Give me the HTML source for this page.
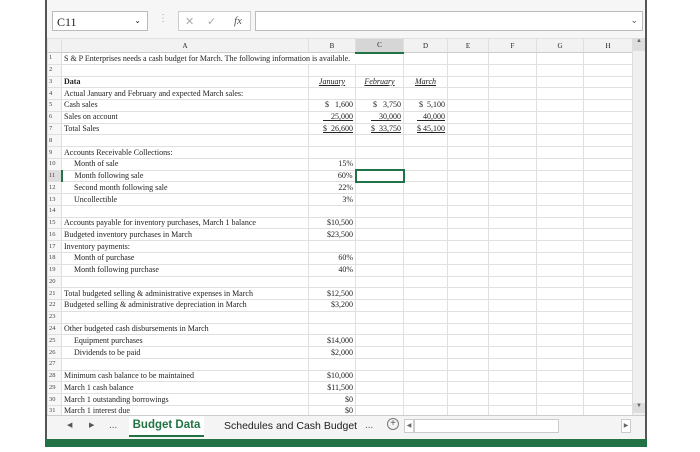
<!DOCTYPE html>
<html><head><meta charset="utf-8"><style>
*{margin:0;padding:0;box-sizing:border-box}
body{width:700px;height:452px;background:#fff;position:relative;overflow:hidden;font-family:"Liberation Serif",serif;color:#222}
.frame{position:absolute;left:45px;top:0;width:602px;height:447px;border-left:2px solid #555;border-right:2px solid #555;background:#f6f6f6}
.nb{position:absolute;left:52px;top:11px;width:96px;height:20px;border:1px solid #bbb;background:#fff;font:12px "Liberation Serif",serif;padding:3px 4px}
.fb{position:absolute;left:178px;top:11px;width:73px;height:20px;border:1px solid #ccc;background:#fff;color:#aaa;font:11px "Liberation Sans",sans-serif}
.fi{position:absolute;left:255px;top:11px;width:388px;height:20px;border:1px solid #bbb;background:#fff}
table{position:absolute;left:47px;top:38px;border-collapse:collapse;table-layout:fixed;background:#fff}
td{height:11.77px;border:1px solid #e0e0e0;font-size:8px;line-height:10px;white-space:nowrap;overflow:visible;padding:0 2px}
tr.h td{height:14px;background:#f2f2f2;text-align:center;font-size:7px;border-bottom:1px solid #ccc}
td.n{font-size:6.5px;color:#444;padding:0 1px;background:#f7f7f7}
td.r{text-align:right}
.u{text-decoration:underline;font-style:italic;text-align:center}
.ul{text-decoration:underline}
.sb{position:absolute;left:632px;top:38px;width:13px;height:377px;background:#f0f0f0;border-left:1px solid #ddd}
.tabs{position:absolute;left:47px;top:415px;width:598px;height:23px;background:#f4f4f4;border-top:1px solid #ccc;font:10px "Liberation Sans",sans-serif}
.green{position:absolute;left:45px;top:439px;width:602px;height:8px;background:#217346}
</style></head><body>
<div class="frame"></div>
<div class="nb">C11<span style="position:absolute;right:6px;top:4px;font-size:8px;font-family:'Liberation Sans',sans-serif">⌄</span></div>
<div style="position:absolute;left:158px;top:13px;color:#aaa;font-size:10px">⋮</div>
<div class="fb"><span style="position:absolute;left:6px;top:3px">✕</span><span style="position:absolute;left:28px;top:3px">✓</span><span style="position:absolute;left:55px;top:3px;color:#555;font-style:italic;font-family:'Liberation Serif',serif">fx</span></div>
<div class="fi"><span style="position:absolute;right:4px;top:3px;font-size:9px;color:#555">⌄</span></div>
<table>
<colgroup><col style="width:14px"><col style="width:247px"><col style="width:47px"><col style="width:48px"><col style="width:44px"><col style="width:41px"><col style="width:48px"><col style="width:47px"><col style="width:49px"></colgroup>
<tr class="h"><td></td><td>A</td><td>B</td><td style="background:#d6d6d6;border-bottom:2px solid #217346">C</td><td>D</td><td>E</td><td>F</td><td>G</td><td>H</td></tr>
<tr><td class="n">1</td><td colspan="3" style="border-right:none">S &amp; P Enterprises needs a cash budget for March. The following information is available.</td><td></td><td></td><td></td><td></td><td></td></tr>
<tr><td class="n">2</td><td></td><td></td><td></td><td></td><td></td><td></td><td></td><td></td></tr>
<tr><td class="n">3</td><td><b>Data</b></td><td class="u">January</td><td class="u">February</td><td class="u">March</td><td></td><td></td><td></td><td></td></tr>
<tr><td class="n">4</td><td>Actual January and February and expected March sales:</td><td></td><td></td><td></td><td></td><td></td><td></td><td></td></tr>
<tr><td class="n">5</td><td>Cash sales</td><td class="r">$&nbsp;&nbsp;&nbsp;1,600</td><td class="r">$&nbsp;&nbsp;&nbsp;3,750</td><td class="r">$&nbsp;&nbsp;5,100</td><td></td><td></td><td></td><td></td></tr>
<tr><td class="n">6</td><td>Sales on account</td><td class="r ul">&nbsp;&nbsp;&nbsp;&nbsp;25,000</td><td class="r ul">&nbsp;&nbsp;&nbsp;&nbsp;30,000</td><td class="r ul">&nbsp;&nbsp;&nbsp;40,000</td><td></td><td></td><td></td><td></td></tr>
<tr><td class="n">7</td><td>Total Sales</td><td class="r ul">$&nbsp;&nbsp;26,600</td><td class="r ul">$&nbsp;&nbsp;33,750</td><td class="r ul">$&nbsp;45,100</td><td></td><td></td><td></td><td></td></tr>
<tr><td class="n">8</td><td></td><td></td><td></td><td></td><td></td><td></td><td></td><td></td></tr>
<tr><td class="n">9</td><td>Accounts Receivable Collections:</td><td></td><td></td><td></td><td></td><td></td><td></td><td></td></tr>
<tr><td class="n">10</td><td>&nbsp;&nbsp;&nbsp;&nbsp;&nbsp;Month of sale</td><td class="r">15%</td><td></td><td></td><td></td><td></td><td></td><td></td></tr>
<tr><td class="n" style="background:#ddd;border-right:2px solid #217346">11</td><td>&nbsp;&nbsp;&nbsp;&nbsp;&nbsp;Month following sale</td><td class="r">60%</td><td style="border:2px solid #217346"></td><td></td><td></td><td></td><td></td><td></td></tr>
<tr><td class="n">12</td><td>&nbsp;&nbsp;&nbsp;&nbsp;&nbsp;Second month following sale</td><td class="r">22%</td><td></td><td></td><td></td><td></td><td></td><td></td></tr>
<tr><td class="n">13</td><td>&nbsp;&nbsp;&nbsp;&nbsp;&nbsp;Uncollectible</td><td class="r">3%</td><td></td><td></td><td></td><td></td><td></td><td></td></tr>
<tr><td class="n">14</td><td></td><td></td><td></td><td></td><td></td><td></td><td></td><td></td></tr>
<tr><td class="n">15</td><td>Accounts payable for inventory purchases, March 1 balance</td><td class="r">$10,500</td><td></td><td></td><td></td><td></td><td></td><td></td></tr>
<tr><td class="n">16</td><td>Budgeted inventory purchases in March</td><td class="r">$23,500</td><td></td><td></td><td></td><td></td><td></td><td></td></tr>
<tr><td class="n">17</td><td>Inventory payments:</td><td></td><td></td><td></td><td></td><td></td><td></td><td></td></tr>
<tr><td class="n">18</td><td>&nbsp;&nbsp;&nbsp;&nbsp;&nbsp;Month of purchase</td><td class="r">60%</td><td></td><td></td><td></td><td></td><td></td><td></td></tr>
<tr><td class="n">19</td><td>&nbsp;&nbsp;&nbsp;&nbsp;&nbsp;Month following purchase</td><td class="r">40%</td><td></td><td></td><td></td><td></td><td></td><td></td></tr>
<tr><td class="n">20</td><td></td><td></td><td></td><td></td><td></td><td></td><td></td><td></td></tr>
<tr><td class="n">21</td><td>Total budgeted selling &amp; administrative expenses in March</td><td class="r">$12,500</td><td></td><td></td><td></td><td></td><td></td><td></td></tr>
<tr><td class="n">22</td><td>Budgeted selling &amp; administrative depreciation in March</td><td class="r">$3,200</td><td></td><td></td><td></td><td></td><td></td><td></td></tr>
<tr><td class="n">23</td><td></td><td></td><td></td><td></td><td></td><td></td><td></td><td></td></tr>
<tr><td class="n">24</td><td>Other budgeted cash disbursements in March</td><td></td><td></td><td></td><td></td><td></td><td></td><td></td></tr>
<tr><td class="n">25</td><td>&nbsp;&nbsp;&nbsp;&nbsp;&nbsp;Equipment purchases</td><td class="r">$14,000</td><td></td><td></td><td></td><td></td><td></td><td></td></tr>
<tr><td class="n">26</td><td>&nbsp;&nbsp;&nbsp;&nbsp;&nbsp;Dividends to be paid</td><td class="r">$2,000</td><td></td><td></td><td></td><td></td><td></td><td></td></tr>
<tr><td class="n">27</td><td></td><td></td><td></td><td></td><td></td><td></td><td></td><td></td></tr>
<tr><td class="n">28</td><td>Minimum cash balance to be maintained</td><td class="r">$10,000</td><td></td><td></td><td></td><td></td><td></td><td></td></tr>
<tr><td class="n">29</td><td>March 1 cash balance</td><td class="r">$11,500</td><td></td><td></td><td></td><td></td><td></td><td></td></tr>
<tr><td class="n">30</td><td>March 1 outstanding borrowings</td><td class="r">$0</td><td></td><td></td><td></td><td></td><td></td><td></td></tr>
<tr><td class="n">31</td><td>March 1 interest due</td><td class="r">$0</td><td></td><td></td><td></td><td></td><td></td><td></td></tr>
</table>
<div class="sb"><div style="height:13px;background:#ddd;font-size:6px;text-align:center;color:#666">▲</div><div style="position:absolute;bottom:2px;width:12px;height:10px;background:#ddd;font-size:6px;text-align:center;color:#666">▼</div></div>
<div class="tabs">
<span style="position:absolute;left:20px;top:5px;font-size:7px;color:#555">◀</span>
<span style="position:absolute;left:42px;top:5px;font-size:7px;color:#555">▶</span>
<span style="position:absolute;left:62px;top:4px;color:#555">...</span>
<div style="position:absolute;left:82px;top:0;width:75px;height:21px;background:#fff;border-bottom:2px solid #217346;color:#217346;font-weight:bold;font-size:11.5px;text-align:center;padding-top:3px">Budget Data</div>
<span style="position:absolute;left:177px;top:4px;font-size:10.5px;color:#222">Schedules and Cash Budget</span>
<span style="position:absolute;left:318px;top:4px;color:#555">...</span>
<span style="position:absolute;left:340px;top:2px;width:12px;height:12px;border:1px solid #777;border-radius:50%;font-size:10px;line-height:10px;text-align:center;color:#555">+</span>
<div style="position:absolute;left:357px;top:3px;width:10px;height:14px;border:1px solid #ccc;background:#fff;font-size:6px;color:#666;text-align:center;line-height:12px">◀</div>
<div style="position:absolute;left:367px;top:3px;width:145px;height:14px;border:1px solid #ccc;background:#fff"></div>
<div style="position:absolute;left:574px;top:3px;width:10px;height:14px;border:1px solid #ccc;background:#fff;font-size:6px;color:#666;text-align:center;line-height:12px">▶</div>
</div>
<div class="green"></div>
</body></html>
